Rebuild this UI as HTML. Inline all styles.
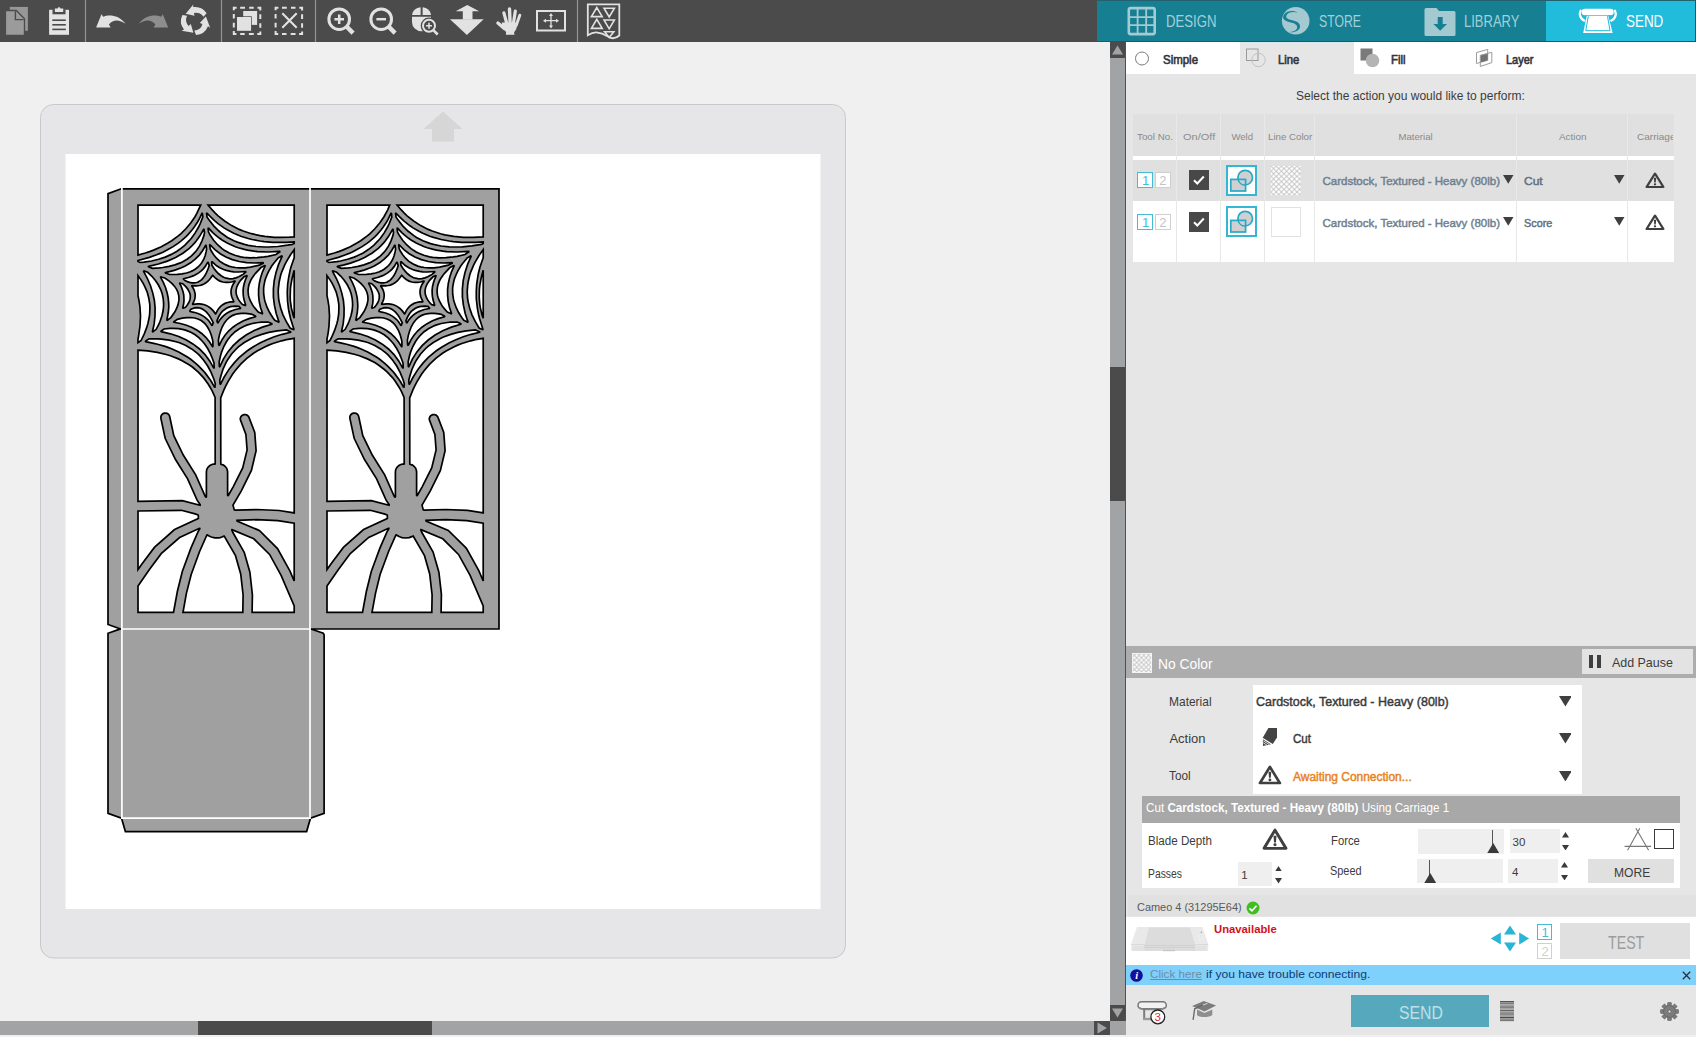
<!DOCTYPE html>
<html lang="en">
<head>
<meta charset="utf-8">
<title>Silhouette Studio - Send</title>
<style>
*{box-sizing:border-box;margin:0;padding:0}
html,body{width:1696px;height:1037px;overflow:hidden;background:#f0f0f0;font-family:"Liberation Sans",sans-serif;color:#3c3c3c}
.abs{position:absolute}
#toolbar{position:absolute;left:0;top:0;width:1097px;height:42px;background:#4b4b4b}
#nav{position:absolute;left:1097px;top:0;width:599px;height:42px;background:#177f92}
#nav .tab{position:absolute;top:-2px;height:42px;color:#a9cfd8;font-size:16px;line-height:42px}
#nav .tab span{position:absolute;top:1px}
#nav .send{left:449px;width:150px;background:#21bbdb;color:#fff;border-bottom:1px solid #2b6470}
#canvas{position:absolute;left:0;top:42px;width:1110px;height:979px;background:#f0f0f0}
#vscroll{position:absolute;left:1110px;top:42px;width:15px;height:979px;background:#a2a3a5}
#vline{position:absolute;left:1125px;top:42px;width:1px;height:995px;background:#505050}
#hscroll{position:absolute;left:0;top:1021px;width:1110px;height:14px;background:#a2a3a5}
#panel{position:absolute;left:1126px;top:42px;width:570px;height:995px;background:#e6e6e6}
.t{position:absolute;white-space:nowrap;line-height:1}
</style>
</head>
<body>
<div id="canvas">
<svg class="abs" style="left:0;top:0" width="1110" height="979" viewBox="0 42 1110 979">
<rect x="40.500" y="104.500" width="805" height="853.500" rx="13" fill="#e6e6e8" stroke="#c9c9cb" stroke-width="1"/>
<path d="M443 111.500l19.500 17.500h-8.500v12.500h-22v-12.500h-8.500z" fill="#d6d6d6"/>
<rect x="65.500" y="154" width="755" height="755" fill="#fff"/>
<path d="M120.5 628.9L108.0 633.3L108.0 813.3L121.5 818.2L125.4 831.6L306.6 831.6L310.5 818.2L324.1 813.3L324.1 634.8L323.2 633.1L311.0 629.0L499.0 629.0L499.0 188.8L121.2 188.8L108.0 193.6L108.0 624.5ZM289.6 237.2L279.3 237.4L274.4 237.3L264.8 236.4L260.2 235.7L251.5 233.7L243.2 231.0L239.2 229.4L231.7 225.6L224.6 221.0L218.1 215.8L215.0 212.8L212.0 209.7L208.1 205.1L294.2 205.1L294.2 236.9ZM292.6 244.3L287.5 245.2L277.9 246.5L268.8 247.0L264.4 247.0L256.1 246.5L248.2 245.3L244.4 244.4L237.3 242.1L233.9 240.7L227.5 237.4L221.6 233.3L218.9 231.0L213.7 225.9L209.1 220.1L207.0 216.9L206.6 213.5L206.9 213.3L207.2 213.4L212.4 218.7L215.1 221.2L218.0 223.6L224.0 227.9L227.2 229.8L233.8 233.3L240.8 236.2L248.2 238.5L252.1 239.5L260.1 241.0L264.2 241.6L272.8 242.3L277.3 242.4L286.5 242.3L294.2 241.8L294.2 243.4ZM294.2 257.8L291.0 267.0L290.1 270.4L288.7 277.3L287.7 284.1L287.3 291.0L287.3 294.4L287.6 301.4L288.4 308.3L289.0 311.8L290.6 318.8L293.9 329.3L293.8 329.6L293.5 329.7L290.1 328.0L286.2 321.4L283.0 314.8L280.7 308.2L279.1 301.6L278.6 298.3L278.2 291.7L278.4 288.4L279.2 281.7L280.7 275.1L281.8 271.8L284.6 265.2L286.3 261.9L290.2 255.2L294.2 249.6ZM294.2 318.2L293.0 314.7L291.3 307.7L290.3 300.5L290.2 296.8L290.4 289.2L290.8 285.3L292.3 277.4L294.2 270.3ZM279.1 510.5L256.8 509.5L235.3 510.2L234.3 509.9L233.0 505.2L241.3 490.8L251.4 470.5L256.1 450.8L254.8 433.0L254.5 431.8L249.0 417.4L248.4 416.3L247.0 415.1L245.4 414.5L243.6 414.7L242.1 415.4L241.4 416.1L240.7 417.2L240.3 418.4L240.4 419.7L245.9 434.4L247.1 449.9L242.7 467.9L233.3 486.6L228.3 495.4L227.8 495.5L227.6 495.2L227.6 472.0L227.4 470.5L226.7 468.3L225.3 466.5L223.5 465.1L221.0 464.3L220.8 464.0L220.7 397.9L223.8 390.1L225.8 385.8L227.9 381.8L232.5 374.3L235.1 370.7L240.7 364.2L246.8 358.4L253.5 353.3L257.1 351.0L264.7 346.9L268.7 345.1L272.9 343.5L281.7 340.8L286.3 339.7L294.2 338.3L294.2 512.9ZM290.0 571.2L277.5 548.6L260.1 531.1L258.5 530.1L237.5 521.3L237.0 520.8L237.0 520.4L256.6 519.7L277.8 520.6L294.2 523.2L294.2 581.0ZM252.4 594.9L249.9 572.2L244.3 552.6L243.8 551.6L232.9 532.5L231.8 530.0L232.0 529.6L253.8 538.8L269.6 554.4L281.1 575.3L294.2 605.9L294.2 612.3L252.1 612.3ZM186.4 593.4L191.2 574.5L199.5 551.7L206.9 535.0L207.3 534.9L209.6 536.3L211.3 537.0L214.8 537.9L218.4 537.9L220.2 537.6L221.9 537.0L223.9 536.1L224.2 536.1L235.5 555.7L240.7 574.0L243.1 595.0L242.8 612.3L183.0 612.3ZM149.6 569.2L161.2 553.7L179.6 537.5L199.4 528.3L199.8 528.4L199.8 528.7L198.1 531.6L190.9 548.1L182.3 571.5L177.4 591.3L173.5 612.3L138.0 612.3L138.0 586.0ZM138.0 511.0L181.4 510.3L195.1 513.9L198.1 514.9L198.3 515.2L198.4 518.3L198.2 518.5L175.1 529.3L174.0 530.0L154.4 547.4L142.1 563.7L138.0 569.6ZM138.0 350.2L147.7 350.9L157.3 352.4L166.2 354.5L170.4 355.8L178.4 358.9L182.1 360.7L189.1 364.7L192.4 367.0L198.3 372.1L203.7 377.9L208.3 384.2L210.4 387.7L212.4 391.3L215.1 397.5L215.2 463.9L214.9 464.2L213.4 464.2L211.9 464.5L209.9 465.5L208.7 466.5L207.7 467.7L206.7 469.7L206.4 472.0L206.4 496.7L206.1 497.1L205.7 497.0L205.1 496.1L195.7 474.9L183.4 455.3L173.8 435.6L169.7 416.6L169.2 415.3L168.1 414.0L167.0 413.3L165.7 413.0L164.4 413.1L163.1 413.6L162.1 414.4L161.3 415.4L160.9 416.7L160.9 418.5L165.1 437.9L165.5 439.0L175.5 459.5L187.6 478.8L197.1 500.2L200.2 504.8L200.1 505.3L182.3 500.7L138.0 501.4ZM138.6 336.0L140.0 326.0L140.5 316.1L139.9 306.4L138.9 300.1L138.0 295.7L138.0 275.6L141.5 280.6L143.2 283.4L144.7 286.3L147.2 292.1L148.8 298.2L149.8 304.3L149.9 307.4L149.7 313.7L149.3 317.0L147.9 323.5L146.9 326.9L144.4 333.6L141.1 340.5L138.0 342.7L138.0 339.0ZM138.0 260.5L149.4 257.4L156.6 254.8L160.1 253.4L163.4 251.9L169.7 248.6L172.7 246.9L178.3 243.1L180.9 241.1L185.8 236.8L188.0 234.6L192.2 229.8L194.1 227.3L197.6 222.0L199.2 219.2L201.9 213.5L202.1 213.3L202.4 213.5L202.8 217.1L200.1 223.8L198.6 227.0L195.2 232.9L191.4 238.2L189.2 240.7L184.7 245.3L179.7 249.3L177.0 251.2L171.3 254.4L165.2 257.1L158.6 259.3L151.5 261.0L144.0 262.1L140.1 262.5L138.0 261.4ZM200.7 205.1L196.8 213.4L195.0 216.7L190.9 222.8L186.1 228.5L180.8 233.8L177.9 236.2L171.7 240.7L168.4 242.8L161.3 246.7L153.6 250.1L149.6 251.6L145.3 253.0L138.0 255.1L138.0 205.1ZM219.8 380.1L220.8 376.3L223.0 369.2L226.0 362.7L227.7 359.7L231.6 354.0L236.2 349.0L238.7 346.6L244.3 342.5L250.5 338.9L253.8 337.3L261.0 334.6L268.8 332.4L277.2 330.9L286.4 329.9L290.6 331.8L290.7 332.1L290.5 332.3L282.2 334.3L278.2 335.5L274.3 336.8L266.9 339.7L259.9 343.0L253.4 346.7L250.3 348.7L247.3 350.8L241.7 355.3L239.1 357.7L234.2 362.9L229.7 368.4L227.7 371.4L223.9 377.5L220.7 383.9L220.4 384.1L220.0 383.8ZM273.8 263.2L278.0 258.1L281.6 256.0L282.0 256.1L282.1 256.4L278.6 264.4L276.0 272.5L274.2 280.6L273.4 288.8L273.4 297.0L274.4 305.2L276.2 313.5L278.9 321.8L278.7 322.2L274.8 320.3L272.9 317.7L269.6 312.5L267.0 307.2L265.2 302.0L264.5 299.4L263.7 294.2L263.6 289.0L263.8 286.4L264.8 281.2L265.5 278.6L267.6 273.5L268.9 270.9L271.9 265.8ZM208.1 228.5L208.3 228.2L208.7 228.3L212.8 232.6L215.0 234.6L219.6 238.3L222.0 240.0L227.2 243.0L229.8 244.3L235.4 246.7L238.3 247.7L244.4 249.4L247.6 250.1L254.1 251.2L257.5 251.6L268.2 252.0L279.4 251.4L279.7 251.5L279.8 251.9L276.0 254.5L268.1 256.3L264.3 256.9L257.0 257.7L250.1 257.8L243.7 257.3L240.6 256.8L234.8 255.3L229.3 253.1L224.3 250.2L222.0 248.6L217.6 244.7L213.6 240.2L210.1 235.0L208.5 232.1ZM220.0 366.4L219.6 366.6L219.3 366.3L219.2 361.7L220.6 355.4L221.5 352.4L223.7 346.8L226.4 341.8L227.9 339.5L231.3 335.3L235.1 331.7L239.4 328.7L244.2 326.2L246.8 325.1L252.3 323.5L258.3 322.5L261.5 322.2L268.1 322.0L271.8 323.7L271.9 324.0L271.7 324.2L262.4 327.1L253.8 330.7L246.1 335.0L239.2 340.0L233.1 345.6L227.9 351.9L223.5 358.9ZM255.5 273.3L260.7 267.8L264.6 265.6L265.0 265.7L265.1 266.0L262.5 271.8L260.6 277.6L259.3 283.5L258.6 289.4L258.6 295.4L259.2 301.4L260.5 307.4L262.5 313.4L262.2 313.8L258.3 312.0L256.6 310.1L253.6 306.5L252.4 304.6L250.4 301.0L249.0 297.3L248.5 295.4L248.1 291.8L248.1 289.9L248.6 286.2L249.1 284.3L250.6 280.7L251.6 278.8L254.0 275.2ZM209.7 245.2L209.9 244.8L210.3 244.9L214.9 249.6L220.2 253.7L225.9 257.0L232.3 259.6L239.2 261.5L246.6 262.6L254.5 263.0L262.9 262.7L263.2 262.9L263.2 263.2L259.3 265.2L250.6 267.1L245.2 267.8L240.1 267.9L235.3 267.5L233.0 267.2L228.8 266.1L224.9 264.4L221.3 262.3L219.6 261.1L216.5 258.2L213.7 254.8L211.3 251.0L210.2 248.8ZM219.3 345.2L219.0 345.3L218.7 345.0L218.4 340.2L219.4 335.1L220.8 330.5L222.4 326.5L224.4 322.9L226.7 320.0L229.4 317.5L232.3 315.6L234.0 314.9L237.5 313.8L241.3 313.3L245.4 313.3L249.8 313.8L252.2 314.3L255.5 316.2L255.6 316.5L255.4 316.7L249.0 318.6L243.0 321.0L237.7 323.9L232.9 327.2L228.6 331.0L225.0 335.3L221.8 340.1ZM240.6 280.3L244.0 276.8L246.6 275.7L247.0 275.8L247.0 276.1L245.5 279.6L244.3 283.2L243.5 286.7L243.1 290.3L243.2 294.0L243.4 296.4L244.1 300.1L245.6 304.9L245.3 305.4L242.5 304.5L240.4 302.2L238.7 299.9L237.5 297.7L236.3 294.2L236.0 290.7L236.7 287.2L238.2 283.8ZM211.7 262.1L211.9 261.8L212.3 261.8L216.3 265.5L219.8 267.7L223.6 269.5L226.3 270.4L230.6 271.4L233.7 271.8L238.6 272.0L245.4 271.5L245.7 271.7L245.8 272.0L243.4 274.1L241.8 275.1L238.8 276.7L235.9 277.9L233.0 278.6L230.2 278.8L228.8 278.7L226.2 278.2L223.6 277.2L221.1 275.7L218.6 273.8L216.3 271.4L214.0 268.5L211.9 265.2ZM217.0 320.7L218.7 316.7L220.6 313.5L222.1 311.7L223.7 310.2L226.4 308.3L228.4 307.4L230.5 306.7L232.7 306.3L235.1 306.2L238.9 306.4L240.5 308.0L240.5 308.3L240.3 308.5L235.3 309.5L231.9 310.7L229.8 311.6L226.8 313.2L224.2 315.1L221.9 317.4L219.8 319.9L218.0 322.8L217.5 322.6ZM191.8 286.1L191.8 285.8L192.1 285.6L196.4 285.8L199.4 285.5L201.3 285.1L203.9 284.0L206.3 282.6L208.5 280.7L210.5 278.3L212.6 275.4L212.8 275.5L215.2 277.8L217.6 279.7L220.1 281.1L222.8 282.0L225.6 282.4L228.5 282.4L231.5 282.0L234.8 281.1L235.0 281.5L232.9 284.7L231.9 287.1L231.4 288.7L231.0 291.2L231.1 293.7L231.6 296.2L232.5 298.7L233.8 301.5L233.5 301.8L230.4 301.9L227.6 302.5L225.0 303.4L222.7 304.7L220.6 306.4L218.8 308.4L217.2 310.9L215.9 313.6L215.5 313.8L213.3 310.9L210.9 308.5L208.5 306.6L205.8 305.2L202.9 304.3L199.8 303.8L197.6 303.8L193.0 304.3L192.7 304.2L192.7 303.8L193.8 301.6L194.7 299.3L195.1 297.0L195.2 294.8L194.9 292.6L194.2 290.4L193.2 288.2ZM145.7 341.7L145.5 341.4L145.6 341.1L149.1 338.9L157.5 338.9L161.5 339.1L169.1 340.1L176.1 341.7L179.5 342.8L185.8 345.5L191.6 348.9L196.8 352.9L199.3 355.2L203.7 360.3L207.7 366.0L211.1 372.4L214.0 379.5L215.2 383.4L215.3 384.7L215.1 385.0L215.0 387.1L214.8 387.2L214.5 387.1L211.5 381.8L209.6 378.9L205.5 373.4L203.3 370.8L198.5 365.9L196.0 363.6L190.7 359.3L187.8 357.3L181.8 353.7L178.7 352.0L172.1 349.0L168.6 347.6L165.1 346.4L157.6 344.2L153.7 343.3ZM161.3 331.7L161.1 331.5L161.2 331.1L164.0 329.0L170.0 328.4L172.9 328.4L178.5 328.7L183.6 329.7L186.1 330.4L190.8 332.3L195.2 334.8L199.1 337.9L201.0 339.8L204.5 343.8L207.7 348.5L210.5 353.9L211.7 356.8L214.0 363.0L214.2 367.8L213.9 367.9L213.6 367.8L209.7 360.9L205.0 354.6L199.5 349.0L193.3 344.2L186.4 340.0L178.8 336.5L170.4 333.8ZM190.2 311.6L189.9 311.2L190.6 309.5L192.8 308.5L194.9 307.9L196.9 307.7L199.0 307.8L200.9 308.4L202.8 309.3L204.7 310.6L206.5 312.2L209.1 315.3L210.7 317.9L213.2 322.5L212.4 325.2L212.1 325.3L211.8 325.2L209.5 321.7L207.4 319.3L205.0 317.3L203.3 316.1L200.4 314.5L197.3 313.2L193.9 312.3ZM174.0 322.3L173.7 322.0L173.8 321.7L177.4 319.4L182.2 318.2L186.7 317.6L190.8 317.5L194.6 318.0L198.0 319.0L201.2 320.6L204.0 322.7L205.3 324.1L207.5 327.0L209.5 330.5L211.1 334.6L212.4 339.2L212.9 341.7L212.9 346.4L212.7 346.6L212.4 346.4L209.4 341.7L205.8 337.3L201.7 333.5L197.2 330.2L192.1 327.4L186.5 325.2L180.4 323.5ZM183.6 279.3L183.5 279.0L183.7 278.7L189.3 277.3L193.1 275.9L195.5 274.8L198.7 272.9L201.5 270.7L203.1 269.1L205.3 266.4L207.6 262.4L207.9 262.3L208.2 262.4L209.2 265.4L208.0 269.2L206.6 272.4L205.1 275.2L203.5 277.6L201.7 279.6L199.8 281.1L197.7 282.2L196.6 282.5L194.3 282.9L191.9 282.9L189.4 282.4L186.8 281.4L185.4 280.8ZM165.6 273.1L165.4 272.8L165.7 272.5L170.4 271.4L175.0 270.1L181.4 267.8L185.2 266.0L190.6 262.8L195.2 259.2L199.3 255.1L202.7 250.5L205.5 245.5L205.8 245.3L206.1 245.5L206.6 249.2L206.2 251.4L205.2 255.5L203.8 259.2L201.9 262.5L200.8 264.0L198.4 266.7L195.5 269.0L192.2 270.9L190.4 271.7L186.5 273.0L182.1 273.9L177.4 274.4L169.6 274.5ZM148.6 266.9L148.4 266.6L148.7 266.3L158.4 264.0L167.4 261.1L175.6 257.5L182.9 253.2L189.3 248.3L191.3 246.5L194.9 242.6L196.6 240.6L199.6 236.3L203.5 229.5L203.8 229.3L204.1 229.5L204.5 233.0L203.8 235.9L201.9 241.1L199.6 245.9L196.7 250.2L195.1 252.2L191.5 255.8L187.4 259.0L182.8 261.7L180.3 262.9L174.9 264.9L169.1 266.4L162.8 267.5L159.4 267.9L152.4 268.3ZM179.7 283.6L179.7 283.3L180.0 283.1L182.7 283.7L185.8 286.6L187.4 288.6L189.1 291.5L189.9 293.5L190.3 295.4L190.3 297.4L190.0 299.4L189.4 301.4L188.4 303.3L187.1 305.3L185.5 307.3L183.2 308.2L182.9 308.1L182.8 307.8L183.7 303.6L184.0 300.5L183.8 295.3L183.2 292.3L182.3 289.4L181.2 286.4ZM160.6 277.3L160.6 277.0L161.0 276.8L165.2 278.2L168.9 280.8L172.1 283.6L174.6 286.4L176.6 289.4L178.0 292.5L178.8 295.8L179.0 299.1L178.8 300.9L178.1 304.4L176.8 308.0L174.9 311.8L170.9 317.6L167.3 320.3L167.0 320.2L166.9 319.9L168.3 312.5L168.8 307.0L168.7 303.4L168.2 298.0L167.1 292.7L165.5 287.5L163.3 282.3ZM143.6 271.4L143.7 271.1L144.0 271.0L147.7 272.3L151.9 276.3L155.4 280.5L158.3 284.8L160.6 289.3L162.2 293.8L163.2 298.5L163.6 303.3L163.6 305.8L163.1 310.8L161.9 316.0L160.1 321.2L159.0 323.9L156.2 329.3L152.9 331.9L152.6 331.8L152.5 331.5L154.2 323.7L155.0 315.8L155.1 308.1L154.4 300.5L152.8 293.1L150.5 285.7L147.4 278.5ZM483.2 236.9L473.4 237.4L468.3 237.4L463.4 237.3L453.8 236.4L444.8 234.8L440.5 233.7L432.2 231.0L428.2 229.4L420.7 225.6L413.6 221.0L407.1 215.8L404.0 212.8L401.0 209.7L397.1 205.1L483.2 205.1ZM483.2 243.4L481.5 244.4L471.7 245.9L462.3 246.8L453.4 247.0L449.2 246.9L441.0 246.0L433.4 244.4L429.8 243.4L422.9 240.7L416.5 237.4L413.5 235.4L407.9 231.0L402.7 225.9L398.1 220.1L396.0 216.9L395.6 213.5L395.9 213.3L396.2 213.4L401.4 218.7L404.1 221.2L410.0 225.8L413.0 227.9L419.4 231.6L422.8 233.3L429.8 236.2L433.5 237.4L441.1 239.5L449.1 241.0L453.2 241.6L461.8 242.3L466.3 242.4L475.5 242.3L483.2 241.8ZM483.2 257.8L480.0 267.0L478.3 273.8L477.7 277.3L476.7 284.1L476.3 291.0L476.3 297.9L476.6 301.4L477.4 308.3L478.7 315.3L479.6 318.8L482.9 329.3L482.8 329.6L482.5 329.7L479.1 328.0L475.2 321.4L472.0 314.8L469.7 308.2L468.1 301.6L467.6 298.3L467.2 291.7L467.7 285.1L468.2 281.7L469.7 275.1L470.8 271.8L473.6 265.2L475.3 261.9L479.2 255.2L483.2 249.6ZM483.2 318.2L482.0 314.7L480.3 307.7L479.7 304.1L479.2 296.8L479.4 289.2L479.8 285.3L481.3 277.4L483.2 270.3ZM483.2 512.9L467.5 510.4L445.8 509.5L424.3 510.2L423.3 509.9L422.0 505.2L430.3 490.8L440.4 470.5L445.1 450.8L443.8 433.0L443.5 431.8L438.0 417.4L437.4 416.3L436.0 415.1L434.4 414.5L432.6 414.7L431.1 415.4L430.4 416.1L429.7 417.2L429.3 418.4L429.4 419.7L434.9 434.4L436.1 449.9L431.7 467.9L422.3 486.6L417.3 495.4L416.8 495.5L416.6 495.2L416.6 472.0L416.4 470.5L415.7 468.3L414.3 466.5L412.5 465.1L410.0 464.3L409.8 464.0L409.7 397.9L412.8 390.1L414.8 385.8L416.9 381.8L421.5 374.3L424.1 370.7L429.7 364.2L435.8 358.4L442.5 353.3L446.1 351.0L453.7 346.9L457.7 345.1L461.9 343.5L470.7 340.8L475.3 339.7L483.2 338.3ZM483.2 581.0L478.8 570.7L466.8 549.0L466.0 547.9L448.3 530.5L426.5 521.3L426.0 520.8L426.0 520.4L445.6 519.7L466.8 520.6L483.2 523.2ZM441.1 612.3L441.4 594.3L438.9 572.2L433.1 552.1L421.9 532.5L420.8 530.0L421.0 529.6L442.8 538.8L458.5 554.4L470.1 575.3L483.2 605.9L483.2 612.3ZM372.0 612.3L375.5 593.4L380.1 574.5L388.5 551.7L395.6 535.6L395.9 535.0L396.3 534.9L398.6 536.3L400.3 537.0L402.0 537.6L405.6 538.0L409.2 537.6L413.2 536.1L424.5 555.7L429.7 574.0L432.1 595.0L431.8 612.3ZM327.0 586.0L338.6 569.2L350.3 553.6L368.7 537.4L388.4 528.3L388.8 528.3L388.8 528.7L387.1 531.6L379.9 548.1L371.3 571.5L366.4 591.3L362.5 612.3L327.0 612.3ZM327.0 511.0L370.3 510.3L384.1 513.9L387.1 514.9L387.3 515.2L387.4 518.2L387.2 518.5L364.1 529.3L363.0 530.0L343.4 547.4L331.1 563.7L327.0 569.6ZM327.0 350.2L336.6 350.9L341.5 351.6L346.3 352.4L355.2 354.5L359.4 355.8L367.4 358.9L374.7 362.6L378.1 364.8L384.4 369.5L387.3 372.1L392.7 377.8L395.1 381.0L399.4 387.7L401.4 391.3L404.1 397.5L404.2 463.9L403.9 464.2L402.4 464.2L400.9 464.5L398.9 465.5L397.7 466.5L396.7 467.7L395.7 469.7L395.4 472.0L395.4 496.7L395.1 497.1L394.7 497.0L394.1 496.1L384.7 474.9L372.4 455.3L362.8 435.6L358.7 416.6L358.2 415.3L357.1 414.0L356.0 413.3L354.7 413.0L353.4 413.1L352.1 413.6L351.1 414.4L350.3 415.4L349.9 416.7L349.9 418.5L354.1 437.9L354.5 439.0L364.5 459.5L376.6 478.8L386.1 500.2L389.2 504.8L389.1 505.3L371.3 500.7L327.0 501.4ZM327.0 339.0L328.2 332.6L329.0 326.0L329.5 316.1L328.9 306.4L327.9 300.1L327.0 295.7L327.0 275.6L330.5 280.6L332.2 283.4L333.7 286.3L336.2 292.1L337.8 298.2L338.8 304.3L338.9 307.4L338.7 313.8L337.7 320.2L336.9 323.5L334.7 330.2L331.8 337.0L330.0 340.5L327.0 342.7ZM327.0 260.5L338.4 257.4L345.6 254.8L349.1 253.4L352.4 251.9L358.7 248.6L361.7 246.9L367.3 243.1L369.9 241.1L374.8 236.8L377.0 234.6L381.2 229.8L383.1 227.3L386.6 222.0L388.2 219.2L390.9 213.5L391.1 213.3L391.5 213.5L391.8 217.1L389.1 223.8L387.6 227.0L384.2 232.9L380.4 238.2L378.2 240.7L373.7 245.3L368.7 249.3L363.2 252.9L357.3 255.8L354.2 257.1L347.6 259.3L340.5 261.0L336.8 261.6L329.1 262.5L327.0 261.4ZM389.7 205.1L387.6 210.1L385.8 213.4L384.0 216.7L379.9 222.8L375.1 228.5L369.8 233.8L366.9 236.2L360.7 240.7L357.4 242.8L350.3 246.7L342.6 250.1L338.6 251.6L334.3 253.0L327.0 255.1L327.0 205.1ZM408.8 380.2L409.8 376.3L412.0 369.2L415.0 362.7L416.7 359.7L420.6 354.0L425.2 349.0L427.7 346.6L433.3 342.5L439.5 338.9L442.8 337.3L450.0 334.6L457.8 332.4L466.2 330.9L475.4 329.9L479.6 331.8L479.7 332.1L479.5 332.3L471.2 334.3L467.2 335.5L463.3 336.8L455.9 339.7L448.9 343.0L442.4 346.7L439.3 348.7L436.3 350.8L430.7 355.3L428.1 357.7L423.2 362.9L418.7 368.4L416.7 371.4L412.9 377.5L409.7 383.9L409.4 384.1L409.0 383.8ZM462.8 263.2L467.0 258.1L470.6 256.0L471.0 256.1L471.1 256.4L467.6 264.4L465.0 272.5L463.2 280.6L462.4 288.8L462.4 297.0L463.4 305.2L465.2 313.5L467.9 321.8L467.7 322.2L463.8 320.3L461.9 317.7L458.6 312.5L456.0 307.2L454.2 302.0L453.5 299.4L452.7 294.2L452.6 289.0L452.8 286.4L453.8 281.2L454.5 278.6L456.6 273.5L457.9 270.9L460.9 265.8ZM397.1 228.6L397.3 228.2L397.7 228.3L401.8 232.6L404.0 234.6L408.6 238.3L411.0 240.0L416.2 243.0L418.8 244.3L424.4 246.7L427.3 247.7L433.4 249.4L436.6 250.1L443.1 251.2L446.5 251.6L457.2 252.0L468.4 251.4L468.7 251.5L468.8 251.9L465.0 254.5L457.1 256.3L453.3 256.9L446.0 257.7L439.1 257.8L432.7 257.3L429.6 256.8L423.8 255.3L418.3 253.1L415.8 251.7L411.0 248.6L406.6 244.7L402.6 240.2L399.1 235.0L397.5 232.1ZM409.0 366.4L408.6 366.6L408.3 366.3L408.2 361.7L409.6 355.4L410.5 352.4L412.7 346.8L415.4 341.8L416.9 339.5L420.3 335.3L424.1 331.7L428.4 328.7L433.2 326.2L435.8 325.1L441.3 323.5L447.3 322.5L450.5 322.2L457.1 322.0L460.8 323.7L460.9 324.0L460.7 324.2L451.4 327.1L442.8 330.7L435.1 335.0L428.2 340.0L422.1 345.6L416.9 351.9L412.5 358.9ZM444.5 273.3L449.7 267.8L453.6 265.6L454.0 265.7L454.1 266.0L451.5 271.8L449.6 277.6L448.3 283.5L447.6 289.4L447.6 295.4L448.2 301.4L449.5 307.4L451.5 313.4L451.2 313.8L447.3 312.0L445.6 310.1L442.6 306.5L441.4 304.6L439.4 301.0L438.0 297.3L437.5 295.4L437.1 291.8L437.1 289.9L437.6 286.2L438.1 284.3L439.6 280.7L440.6 278.8L443.0 275.2ZM398.7 245.2L398.9 244.8L399.3 244.9L403.9 249.6L409.2 253.7L414.9 257.0L421.3 259.6L428.2 261.5L435.6 262.6L443.5 263.0L451.9 262.7L452.2 262.9L452.2 263.2L448.3 265.2L439.6 267.1L434.2 267.8L429.1 267.9L424.3 267.5L422.0 267.2L417.8 266.1L413.9 264.4L410.3 262.3L408.6 261.1L405.5 258.2L402.7 254.8L400.3 251.0L399.2 248.8ZM408.4 345.1L408.0 345.3L407.7 345.0L407.4 340.2L408.4 335.1L409.8 330.5L411.4 326.5L413.4 322.9L415.7 320.0L418.4 317.5L421.3 315.6L423.0 314.9L426.5 313.8L430.3 313.3L434.4 313.3L438.8 313.8L441.2 314.3L444.5 316.2L444.6 316.5L444.4 316.7L438.0 318.6L432.0 321.0L426.7 323.9L421.9 327.2L417.6 331.0L414.0 335.3L410.8 340.1ZM429.6 280.3L433.0 276.8L435.6 275.7L436.0 275.8L436.0 276.1L434.5 279.6L433.3 283.2L432.5 286.7L432.1 290.3L432.2 294.0L432.4 296.4L433.1 300.1L434.6 304.9L434.3 305.4L431.5 304.5L429.4 302.2L427.7 299.9L426.5 297.7L425.3 294.2L425.0 290.7L425.7 287.2L427.2 283.8ZM400.7 262.1L400.9 261.8L401.3 261.8L405.3 265.5L408.8 267.7L412.6 269.5L415.3 270.4L419.6 271.4L422.7 271.8L427.6 272.0L434.4 271.5L434.7 271.6L434.8 272.0L432.4 274.1L430.8 275.1L427.8 276.7L424.9 277.9L422.0 278.6L419.2 278.8L417.8 278.7L415.2 278.2L412.6 277.2L410.1 275.7L407.6 273.8L405.3 271.4L403.0 268.5L400.9 265.2ZM406.0 320.7L407.7 316.7L409.6 313.5L411.1 311.7L412.7 310.2L415.4 308.3L417.4 307.4L419.5 306.7L421.7 306.3L424.1 306.2L427.9 306.4L429.5 308.0L429.5 308.3L429.3 308.5L424.3 309.5L420.9 310.7L418.8 311.6L415.8 313.2L413.2 315.1L410.9 317.4L408.8 319.9L407.0 322.8L406.5 322.6ZM380.8 286.2L380.8 285.8L381.1 285.6L385.4 285.8L388.4 285.5L390.3 285.1L392.9 284.0L395.3 282.6L397.5 280.7L399.5 278.3L401.6 275.4L401.8 275.5L404.2 277.8L406.6 279.7L409.1 281.1L411.8 282.0L414.6 282.4L417.5 282.4L420.5 282.0L423.8 281.1L424.0 281.5L421.9 284.7L420.9 287.1L420.4 288.7L420.0 291.2L420.1 293.7L420.6 296.2L421.5 298.7L422.8 301.5L422.5 301.8L419.4 301.9L416.6 302.5L414.0 303.4L411.7 304.7L409.6 306.4L407.8 308.4L406.2 310.9L404.9 313.6L404.5 313.8L402.3 310.9L399.9 308.5L397.5 306.6L394.8 305.2L391.9 304.3L388.8 303.8L386.6 303.8L382.0 304.3L381.7 304.2L381.7 303.8L382.8 301.6L383.7 299.3L384.1 297.0L384.2 294.8L383.9 292.6L383.2 290.4L382.2 288.2ZM334.8 341.7L334.5 341.4L334.6 341.1L338.1 338.9L346.5 338.9L350.5 339.1L358.1 340.1L365.1 341.7L368.5 342.8L374.8 345.5L380.6 348.9L385.8 352.9L388.3 355.2L392.7 360.3L396.7 366.0L400.1 372.4L403.0 379.5L404.2 383.4L404.3 384.7L404.1 385.0L404.0 387.1L403.8 387.2L403.5 387.1L400.5 381.8L398.6 378.9L394.5 373.4L392.3 370.8L387.5 365.9L385.0 363.6L379.7 359.3L376.8 357.3L370.8 353.7L367.7 352.0L361.1 349.0L357.6 347.6L354.1 346.4L346.6 344.2L342.7 343.3ZM350.4 331.7L350.1 331.5L350.2 331.1L353.0 329.0L359.0 328.4L361.9 328.4L367.5 328.7L372.6 329.7L375.1 330.4L379.8 332.3L384.2 334.8L388.1 337.9L390.0 339.8L393.5 343.8L396.7 348.5L399.5 353.9L400.7 356.8L403.0 363.0L403.2 367.8L402.9 367.9L402.6 367.8L398.7 360.9L394.0 354.6L388.5 349.0L382.3 344.2L375.4 340.0L367.8 336.5L359.4 333.8ZM379.2 311.6L378.9 311.2L379.6 309.5L381.8 308.5L383.9 307.9L385.9 307.7L388.0 307.8L389.9 308.4L391.8 309.3L393.7 310.6L395.5 312.2L398.1 315.3L399.7 317.9L402.2 322.5L401.4 325.2L401.1 325.3L400.8 325.2L398.5 321.7L396.4 319.3L394.0 317.3L392.3 316.1L389.4 314.5L386.3 313.2L382.9 312.3ZM363.0 322.3L362.7 322.1L362.8 321.7L366.4 319.4L371.2 318.2L375.7 317.6L379.8 317.5L383.6 318.0L387.0 319.0L390.2 320.6L393.0 322.7L394.3 324.1L396.5 327.0L398.5 330.5L400.1 334.6L401.4 339.2L401.9 341.7L401.9 346.4L401.7 346.6L401.4 346.4L398.4 341.7L394.8 337.3L390.7 333.5L386.2 330.2L381.1 327.4L375.5 325.2L369.4 323.5ZM372.6 279.3L372.5 279.0L372.7 278.7L378.3 277.3L382.1 275.9L384.5 274.8L387.7 272.9L390.5 270.7L392.1 269.1L394.3 266.4L396.6 262.4L396.9 262.3L397.2 262.4L398.2 265.4L397.0 269.2L395.6 272.4L394.1 275.2L392.5 277.6L390.7 279.6L388.8 281.1L386.7 282.2L385.6 282.5L383.3 282.9L380.9 282.9L378.4 282.4L375.8 281.4L374.4 280.8ZM354.7 273.1L354.4 272.8L354.7 272.5L359.4 271.4L364.0 270.1L370.4 267.8L374.2 266.0L379.6 262.8L384.2 259.2L388.3 255.1L391.7 250.5L394.5 245.5L394.8 245.3L395.1 245.5L395.6 249.2L395.2 251.4L394.2 255.5L392.8 259.2L390.9 262.5L389.8 264.0L387.4 266.7L384.5 269.0L381.2 270.9L379.4 271.7L375.5 273.0L371.1 273.9L366.4 274.4L358.6 274.5ZM337.7 266.9L337.4 266.6L337.7 266.3L344.2 264.9L350.5 263.1L359.2 260.0L364.6 257.5L371.9 253.2L378.3 248.3L380.3 246.5L383.9 242.6L385.6 240.6L388.6 236.3L392.5 229.5L392.8 229.3L393.1 229.5L393.5 233.0L392.8 235.9L390.9 241.1L388.6 245.9L385.7 250.2L384.1 252.2L380.5 255.8L376.4 259.0L371.8 261.7L369.3 262.9L363.9 264.9L358.1 266.4L351.8 267.5L348.4 267.9L341.4 268.3ZM368.7 283.6L368.7 283.3L369.0 283.1L371.7 283.7L374.8 286.6L376.4 288.6L378.1 291.5L378.9 293.5L379.3 295.4L379.3 297.4L379.0 299.4L378.4 301.4L377.4 303.3L376.1 305.3L374.5 307.3L372.2 308.2L371.9 308.1L371.8 307.8L372.7 303.6L373.0 300.5L372.8 295.3L372.2 292.3L371.3 289.4L370.2 286.4ZM349.6 277.4L349.6 277.0L350.0 276.8L354.2 278.2L357.9 280.8L361.1 283.6L363.6 286.4L365.6 289.4L367.0 292.5L367.8 295.8L368.0 299.1L367.8 300.9L367.1 304.4L365.8 308.0L363.9 311.8L359.9 317.6L356.3 320.3L356.0 320.2L355.9 319.9L357.3 312.5L357.8 307.0L357.7 303.4L357.2 298.0L356.1 292.7L354.5 287.5L352.3 282.3ZM332.6 271.5L332.6 271.1L333.0 271.0L336.7 272.3L340.9 276.3L344.4 280.5L347.3 284.8L349.6 289.3L351.2 293.8L352.2 298.5L352.6 303.3L352.6 305.8L352.1 310.8L350.9 316.0L349.1 321.2L348.0 323.9L345.2 329.3L341.9 331.9L341.6 331.8L341.5 331.5L343.2 323.7L344.0 315.8L344.1 308.1L343.4 300.5L341.8 293.1L339.5 285.7L336.4 278.5Z" fill="#a0a0a0" fill-rule="evenodd" stroke="#000" stroke-width="1.700" stroke-linejoin="miter"/>
<path d="M121.900 188V818.900M310 188V818.900M121.900 629H310M121.900 818.100H310" fill="none" stroke="#fff" stroke-width="1.700"/>
</svg>
</div>
<div id="vscroll"><div class="abs" style="left:0;top:0;width:15px;height:16px;background:#4b4b4b"></div><svg class="abs" style="left:0;top:0" width="15" height="16"><path d="M7.500 3.500l5.500 9H2z" fill="#a2a3a5"/></svg><div class="abs" style="left:0;top:325px;width:15px;height:134px;background:#4b4b4b"></div><div class="abs" style="left:0;top:963px;width:15px;height:16px;background:#4b4b4b"></div><svg class="abs" style="left:0;top:963px" width="15" height="16"><path d="M7.500 12.500l5.500-9H2z" fill="#a2a3a5"/></svg></div>
<div id="vline"></div>
<div id="hscroll"><div class="abs" style="left:198px;top:0;width:234px;height:14px;background:#4b4b4b"></div><div class="abs" style="left:1094px;top:0;width:16px;height:14px;background:#4b4b4b"></div><svg class="abs" style="left:1094px;top:0" width="16" height="14"><path d="M13 7l-9.500 5.500v-11z" fill="#a2a3a5"/></svg></div>
<div class="abs" style="left:1110px;top:1021px;width:16px;height:14px;background:#a2a3a5"></div>
<div class="abs" style="left:0;top:1034.600px;width:1126px;height:2.400px;background:#efefef"></div>
<div id="toolbar">
<svg width="1097" height="42" viewBox="0 0 1097 42" style="position:absolute;left:0;top:0">
<g fill="none" stroke="#949494" stroke-width="1.200">
<line x1="85.5" y1="0" x2="85.5" y2="42"/><line x1="221.5" y1="0" x2="221.5" y2="42"/><line x1="315.5" y1="0" x2="315.5" y2="42"/><line x1="577.5" y1="0" x2="577.5" y2="42"/>
</g>
<!-- copy (dim) -->
<rect x="9.800" y="6.900" width="18.100" height="23.900" fill="#979797"/>
<path d="M6.100 11.100H16L23.800 19V34.800H6.100Z" fill="#9b9b9b"/>
<path d="M5.500 10.500H16.300L24.500 18.800V31" fill="none" stroke="#4b4b4b" stroke-width="1.300"/>
<path d="M15.400 11.300V19.600H23.600" fill="none" stroke="#4b4b4b" stroke-width="1.400"/>
<!-- paste -->
<rect x="49.100" y="9.800" width="19.900" height="25" fill="#e4e4e4"/>
<rect x="52.500" y="9.500" width="13" height="4.800" fill="#4b4b4b"/>
<path d="M54.900 11.900V8.600H57.500L59.050 6.800L60.600 8.600H63.200V11.900Z" fill="#e4e4e4"/>
<g fill="#4b4b4b"><rect x="52.300" y="19.400" width="13.500" height="1.600"/><rect x="52.300" y="24" width="13.500" height="1.600"/><rect x="52.300" y="28.600" width="13.500" height="1.600"/></g>
<!-- undo -->
<path d="M96.100 27.600L101.500 14.200L103.200 16.800C109 14.300 119 15 125.600 23.800C120 19.600 113 18.800 108.900 24.500L110.700 27.600Z" fill="#e2e2e2"/>
<!-- redo -->
<path d="M168.200 27.600L162.800 14.200L161.100 16.800C155.300 14.300 145.300 15 138.700 23.800C144.300 19.600 151.300 18.800 155.400 24.500L153.600 27.600Z" fill="#8e8e8e"/>
<!-- refresh -->
<path d="M196.0 35.0A14.0 14.0 0 0 0 208.0 26.2L210.2 27.8L205.9 16.6L199.8 23.1L202.4 24.0A8.0 8.0 0 0 1 194.3 30.5ZM206.6 13.2A14.0 14.0 0 0 0 193.1 7.1L193.3 4.5L185.7 13.7L194.5 15.8L193.9 13.1A8.0 8.0 0 0 1 203.5 16.8ZM182.4 14.9A14.0 14.0 0 0 0 184.0 29.6L181.6 30.8L193.4 32.7L190.8 24.1L188.7 25.9A8.0 8.0 0 0 1 187.1 15.7Z" fill="#e2e2e2"/>
<!-- select all -->
<g fill="none" stroke="#e2e2e2" stroke-width="2" stroke-dasharray="5.600 3.560 4.840 4.200 4.500 3.800" stroke-dashoffset="2.800" stroke-linejoin="miter"><rect x="233.800" y="7.800" width="26.500" height="26.300"/><rect x="275.600" y="7.800" width="26.500" height="26.300"/></g>
<rect x="243.200" y="11" width="13.900" height="13.900" fill="#e2e2e2"/><rect x="236.300" y="16.300" width="15.500" height="15.200" fill="#4b4b4b"/><rect x="237" y="17" width="14.100" height="13.800" fill="#e2e2e2"/>
<!-- deselect -->
<path d="M282.300 13.300l14.400 14.400M296.700 13.300l-14.400 14.400" stroke="#e2e2e2" stroke-width="2.100" fill="none"/>
<!-- zoom in -->
<g fill="none" stroke="#e2e2e2"><circle cx="339.200" cy="19.200" r="10.300" stroke-width="3"/><path d="M346.800 26.800l6.300 6.300" stroke-width="4.400"/><path d="M334.400 19.200h9.600M339.200 14.400v9.600" stroke-width="2.500"/></g>
<!-- zoom out -->
<g fill="none" stroke="#e2e2e2"><circle cx="381.200" cy="19.200" r="10.300" stroke-width="3"/><path d="M388.800 26.800l6.300 6.300" stroke-width="4.400"/><path d="M376.400 19.200h9.600" stroke-width="2.500"/></g>
<!-- zoom select -->
<g fill="#e2e2e2"><path d="M420.600 7.300a9 8 0 0 0-8.600 7.700h8.600z"/><path d="M422.600 7.300a9 8 0 0 1 8.400 7.700h-8.400z"/><path d="M412 16.800H431V22a9.500 9.300 0 0 1-19 0Z"/></g>
<circle cx="429" cy="25.800" r="8.300" fill="#4b4b4b"/>
<g fill="none" stroke="#e2e2e2"><circle cx="429" cy="25.800" r="6" stroke-width="2" fill="#4b4b4b"/><path d="M433.500 30.300l4.200 4.200" stroke-width="2.600"/><path d="M426 25.800h6M429 22.800v6" stroke-width="1.600"/></g>
<!-- down arrows -->
<g fill="#e2e2e2"><path d="M467.300 5L479.200 11.300H472.500V19.500H462.800V11.300H455.700Z"/><path d="M450 19.200H483.700L466.900 34.900Z"/></g>
<!-- hand -->
<g fill="none" stroke="#e2e2e2" stroke-linecap="round"><path d="M503.900 12.900L506.900 24" stroke-width="3.200"/><path d="M509.500 9L510.100 23" stroke-width="3.400"/><path d="M515.300 11.200L513.400 23.500" stroke-width="3.200"/><path d="M519.800 15.200L516.200 25.500" stroke-width="2.900"/><path d="M497.900 23.100L504.600 28.800" stroke-width="3.300"/></g>
<path d="M501.800 22.400L517.600 22.400L516.300 29.100L514 32.500L514.500 34.800L505.900 34.800L506.100 31.900L502.300 27.500Z" fill="#e2e2e2"/>
<!-- fit -->
<g fill="none" stroke="#e2e2e2"><rect x="537" y="11" width="28" height="19.500" stroke-width="2"/><path d="M544.500 20.700h13M551 14.500v12.500" stroke-width="1.300"/></g>
<g fill="#e2e2e2"><path d="M543 20.700l3-2v4zM559 20.700l-3-2v4zM551 13l2 3h-4zM551 28.500l2-3h-4z"/></g>
<!-- triangles -->
<g fill="none" stroke="#e2e2e2" stroke-width="1.800" stroke-linejoin="miter"><path d="M587.800 4.300H619.300V35.500C616 38.500 611.500 38.800 608 36.500C603.500 33.600 600 32.600 596.400 32.400C593.500 32.300 590.500 33.500 587.800 35.200Z"/><path d="M591.400 16.600L596.800 7.600L602.200 16.600ZM604 8.200H614.400L609.200 17ZM591.400 28.400L596.800 19.400L602.200 28.400ZM604 20H614.400L609.200 28.800ZM604.600 31.800H613.800L609.200 37.500Z" stroke-width="1.600"/></g>
</svg>
</div>
<div id="nav">
<div class="abs" style="left:449px;top:0;width:150px;height:42px;background:#21bbdb"></div>
<svg class="abs" style="left:0;top:0" width="599" height="42" viewBox="1097 0 599 42">
<g fill="none" stroke="#a3cbd3"><rect x="1128.800" y="8.100" width="25.900" height="26" rx="1.800" stroke-width="2.600"/><path d="M1137.600 9v24.500M1146.200 9v24.500M1130 17.100h24M1130 25.200h24" stroke-width="1.800"/></g>
<circle cx="1295.700" cy="20.800" r="13.800" fill="#a5c9d1"/>
<path d="M1297.700 12.700C1294 10.200 1287 10.500 1284 14.500C1281.500 18.500 1284.500 21 1290 22.300C1294.500 23.400 1297.200 24.600 1297.200 27.200C1297.200 30 1293.500 32 1288.300 32.100C1295 33 1300.500 30 1300 26C1299.700 22.500 1296 21.300 1291.500 20.100C1287.500 19 1285.300 17.800 1286.500 15.300C1288 12 1293.500 11.300 1297.700 12.700Z" fill="#177f92"/>
<path d="M1424.500 9.500a1.500 1.500 0 0 1 1.500-1.500h10.500l2.500 3h15a1.500 1.500 0 0 1 1.500 1.500v22a1.500 1.500 0 0 1-1.500 1.500h-28a1.500 1.500 0 0 1-1.500-1.500z" fill="#a5c9d1"/>
<path d="M1437.700 17h5v7h4.300l-6.800 6.800-6.800-6.800h4.300z" fill="#177f92"/>
<g fill="#fff"><rect x="1581.700" y="8.800" width="32" height="6.400" rx="3.200"/><path d="M1586.900 15H1608.100L1612.600 33H1583.200Z"/></g>
<g fill="none" stroke="#fff" stroke-width="2.300" stroke-linecap="round"><path d="M1580.600 10.800C1578.800 14.500 1580.500 19 1584.300 20.600"/><path d="M1615 10.800C1616.800 14.500 1615.100 19 1611.300 20.600"/></g>
<path d="M1588.300 16.200L1585.800 30.700H1610L1607.500 16.200" fill="none" stroke="#21bbdb" stroke-width="1"/><path d="M1585 15.500H1610.500" stroke="#21bbdb" stroke-width=".7"/>
</svg>
<span class="t" style="left:69.0px;top:14.2px;font-size:15.9px;color:#a0d0da;transform:scaleX(0.828);transform-origin:0 50%;">DESIGN</span>
<span class="t" style="left:221.5px;top:14.2px;font-size:15.9px;color:#a0d0da;transform:scaleX(0.771);transform-origin:0 50%;">STORE</span>
<span class="t" style="left:366.6px;top:14.2px;font-size:15.9px;color:#a0d0da;transform:scaleX(0.818);transform-origin:0 50%;">LIBRARY</span>
<span class="t" style="left:528.5px;top:14.2px;font-size:15.9px;color:#ffffff;transform:scaleX(0.844);transform-origin:0 50%;">SEND</span>
<div class="abs" style="left:0;top:0;width:599px;height:1.300px;background:#24606e"></div><div class="abs" style="left:0;top:40.700px;width:599px;height:1.300px;background:#2a5560"></div><div class="abs" style="left:597.700px;top:0;width:1.300px;height:42px;background:#2a5560"></div>
</div>
<div id="panel">
<svg width="0" height="0" style="position:absolute"><defs><pattern id="hatch2" width="4.750" height="4.750" patternUnits="userSpaceOnUse"><rect width="4.750" height="4.750" fill="#fff"/><path d="M0 0L4.750 4.750M4.750 0L0 4.750" stroke="#c6c6c6" stroke-width="1"/></pattern><pattern id="hatch" width="5.200" height="5.200" patternUnits="userSpaceOnUse"><rect width="5.200" height="5.200" fill="#fff"/><path d="M0 0L5.200 5.200M5.200 0L0 5.200" stroke="#c6c6c6" stroke-width="1.050"/></pattern></defs></svg>
<div class="abs" style="left:0.0px;top:0.0px;width:570.0px;height:32.0px;background:#fff;"></div>
<div class="abs" style="left:114.0px;top:0.0px;width:113.8px;height:32.0px;background:#e6e6e6;"></div>
<div class="abs" style="left:114.0px;top:0.0px;width:113.8px;height:0.8px;background:#d6e8ee;"></div>
<svg class="abs" style="left:0;top:0" width="570" height="32" viewBox="1126 42 570 32"><circle cx="1142" cy="58.500" r="6.500" fill="#fff" stroke="#7a7a7a" stroke-width="1"/><rect x="1246.500" y="49" width="11.500" height="11.500" fill="none" stroke="#9a9a9a" stroke-width="1"/><circle cx="1258.500" cy="60" r="6.700" fill="none" stroke="#c2c2c2" stroke-width="1"/><rect x="1360.500" y="48.500" width="12" height="12" fill="#7a7a7a"/><circle cx="1372.500" cy="60.500" r="6.800" fill="#b4b4b4"/><path d="M1476.500 52.600L1487.700 49.400V60.300L1476.500 63.500Z" fill="#fff" stroke="#9c9c9c" stroke-width="1"/><path d="M1480.300 55.300L1487.700 53.300V60.300L1480.300 62.400Z" fill="#727272"/><path d="M1480.300 55.300L1491.800 52.300V62.600L1480.300 66.500Z" fill="none" stroke="#9c9c9c" stroke-width="1"/></svg>
<span class="t" style="left:37.0px;top:11.5px;font-size:12px;color:#34343c;transform:scaleX(0.954);transform-origin:0 50%;-webkit-text-stroke:0.6px #34343c;">Simple</span>
<span class="t" style="left:151.7px;top:11.5px;font-size:12px;color:#34343c;transform:scaleX(0.939);transform-origin:0 50%;-webkit-text-stroke:0.6px #34343c;">Line</span>
<span class="t" style="left:265.4px;top:11.5px;font-size:12px;color:#34343c;transform:scaleX(0.946);transform-origin:0 50%;-webkit-text-stroke:0.6px #34343c;">Fill</span>
<span class="t" style="left:379.5px;top:11.5px;font-size:12px;color:#34343c;transform:scaleX(0.916);transform-origin:0 50%;-webkit-text-stroke:0.6px #34343c;">Layer</span>
<span class="t" style="left:170.0px;top:47.8px;font-size:12px;color:#3c3c3c;">Select the action you would like to perform:</span>
<div class="abs" style="left:7.0px;top:72.3px;width:540.5px;height:41.7px;background:#e0e0e0;"></div>
<div class="abs" style="left:7.0px;top:114.0px;width:540.5px;height:3.5px;background:#fff;"></div>
<div class="abs" style="left:7.0px;top:117.5px;width:540.5px;height:41.5px;background:#e0e0e0;"></div>
<div class="abs" style="left:7.0px;top:159.0px;width:540.5px;height:61.0px;background:#fff;"></div>
<div class="abs" style="left:50.0px;top:72.3px;width:1.0px;height:147.7px;background:#e8e8e8;"></div>
<div class="abs" style="left:94.2px;top:72.3px;width:1.0px;height:147.7px;background:#e8e8e8;"></div>
<div class="abs" style="left:138.1px;top:72.3px;width:1.0px;height:147.7px;background:#e8e8e8;"></div>
<div class="abs" style="left:188.3px;top:72.3px;width:1.0px;height:147.7px;background:#e8e8e8;"></div>
<div class="abs" style="left:390.2px;top:72.3px;width:1.0px;height:147.7px;background:#e8e8e8;"></div>
<div class="abs" style="left:501.2px;top:72.3px;width:1.0px;height:147.7px;background:#e8e8e8;"></div>
<span class="t" style="left:10.8px;top:89.8px;font-size:9.6px;color:#8a8a8a;transform:scaleX(1.019);transform-origin:0 50%;">Tool No.</span>
<span class="t" style="left:56.8px;top:89.8px;font-size:9.6px;color:#8a8a8a;transform:scaleX(1.146);transform-origin:0 50%;">On/Off</span>
<span class="t" style="left:105.4px;top:89.8px;font-size:9.6px;color:#8a8a8a;">Weld</span>
<span class="t" style="left:141.7px;top:89.8px;font-size:9.6px;color:#8a8a8a;transform:scaleX(1.012);transform-origin:0 50%;">Line Color</span>
<span class="t" style="left:272.5px;top:89.8px;font-size:9.6px;color:#8a8a8a;">Material</span>
<span class="t" style="left:432.8px;top:89.8px;font-size:9.6px;color:#8a8a8a;transform:scaleX(1.034);transform-origin:0 50%;">Action</span>
<div class="abs" style="left:511.3px;top:84.0px;width:36.2px;height:20px;overflow:hidden"><span class="t" style="left:0.0px;top:5.8px;font-size:9.6px;color:#8a8a8a;transform:scaleX(1.046);transform-origin:0 50%;">Carriage</span></div>
<div class="abs" style="left:11.2px;top:130.2px;width:16px;height:15.500px;border:1.500px solid #45bcd6;background:#fff"></div>
<div class="abs" style="left:28.8px;top:130.2px;width:16px;height:15.500px;border:1px solid #cfcfcf;background:#fff"></div>
<span class="t" style="left:16.0px;top:131.7px;font-size:13px;color:#45bcd6;">1</span>
<span class="t" style="left:33.3px;top:131.7px;font-size:13px;color:#c4c4c4;">2</span>
<svg class="abs" style="left:62.5px;top:128.0px" width="20" height="20" viewBox="0 0 20 20"><rect width="20" height="20" fill="#484848"/><path d="M5 10.200l3.300 3.300 6.500-7" fill="none" stroke="#fff" stroke-width="2"/></svg>
<svg class="abs" style="left:100.0px;top:122.6px" width="31" height="31" viewBox="0 0 31 31"><rect x="1" y="1" width="29" height="29" fill="#fff" stroke="#35b6d4" stroke-width="2"/><circle cx="19.200" cy="12.600" r="7.300" fill="#d0d0d0" stroke="#27a9c8" stroke-width="1.700"/><rect x="4.800" y="14.400" width="14.800" height="11.600" fill="#d0d0d0" stroke="#27a9c8" stroke-width="1.700"/><path d="M12 14.400a7.300 7.300 0 0 0 7.600 5.500" fill="none" stroke="#27a9c8" stroke-width="1.500"/></svg>
<svg class="abs" style="left:144.6px;top:123.7px" width="30" height="29" viewBox="0 0 30 29"><rect width="30" height="29" fill="url(#hatch)"/></svg>
<span class="t" style="left:196.5px;top:134.1px;font-size:11.5px;color:#6f7f8f;-webkit-text-stroke:0.45px #6f7f8f;">Cardstock, Textured - Heavy (80lb)</span>
<svg class="abs" style="left:377.3px;top:133.4px" width="10.5" height="8.8" viewBox="0 0 10 10" preserveAspectRatio="none"><polygon points="0,0 10,0 5,10" fill="#3f3f3f"/></svg>
<span class="t" style="left:398.4px;top:134.1px;font-size:11.5px;color:#60707f;transform:scaleX(1.045);transform-origin:0 50%;-webkit-text-stroke:0.45px #60707f;">Cut</span>
<svg class="abs" style="left:488.3px;top:133.4px" width="10.5" height="8.8" viewBox="0 0 10 10" preserveAspectRatio="none"><polygon points="0,0 10,0 5,10" fill="#3f3f3f"/></svg>
<svg class="abs" style="left:519.0px;top:129.8px" width="20.0" height="16.2" viewBox="0 0 20 18" preserveAspectRatio="none"><path d="M10 1.700L18.400 16.600H1.600z" fill="none" stroke="#3f3f3f" stroke-width="2.300" stroke-linejoin="round"/><path d="M8.850 6.300h2.300l-.4 5.500h-1.500z" fill="#3f3f3f"/><circle cx="10" cy="13.700" r="1.200" fill="#3f3f3f"/></svg>
<div class="abs" style="left:11.2px;top:172.0px;width:16px;height:15.500px;border:1.500px solid #45bcd6;background:#fff"></div>
<div class="abs" style="left:28.8px;top:172.0px;width:16px;height:15.500px;border:1px solid #cfcfcf;background:#fff"></div>
<span class="t" style="left:16.0px;top:173.5px;font-size:13px;color:#45bcd6;">1</span>
<span class="t" style="left:33.3px;top:173.5px;font-size:13px;color:#c4c4c4;">2</span>
<svg class="abs" style="left:62.5px;top:169.8px" width="20" height="20" viewBox="0 0 20 20"><rect width="20" height="20" fill="#484848"/><path d="M5 10.200l3.300 3.300 6.500-7" fill="none" stroke="#fff" stroke-width="2"/></svg>
<svg class="abs" style="left:100.0px;top:164.4px" width="31" height="31" viewBox="0 0 31 31"><rect x="1" y="1" width="29" height="29" fill="#fff" stroke="#35b6d4" stroke-width="2"/><circle cx="19.200" cy="12.600" r="7.300" fill="#d0d0d0" stroke="#27a9c8" stroke-width="1.700"/><rect x="4.800" y="14.400" width="14.800" height="11.600" fill="#d0d0d0" stroke="#27a9c8" stroke-width="1.700"/><path d="M12 14.400a7.300 7.300 0 0 0 7.600 5.500" fill="none" stroke="#27a9c8" stroke-width="1.500"/></svg>
<div class="abs" style="left:144.6px;top:165.3px;width:30px;height:29.500px;border:1px solid #e2e2e2;background:#fff"></div>
<span class="t" style="left:196.5px;top:175.9px;font-size:11.5px;color:#6f7f8f;-webkit-text-stroke:0.45px #6f7f8f;">Cardstock, Textured - Heavy (80lb)</span>
<svg class="abs" style="left:377.3px;top:175.2px" width="10.5" height="8.8" viewBox="0 0 10 10" preserveAspectRatio="none"><polygon points="0,0 10,0 5,10" fill="#3f3f3f"/></svg>
<span class="t" style="left:398.4px;top:175.9px;font-size:11.5px;color:#60707f;transform:scaleX(0.942);transform-origin:0 50%;-webkit-text-stroke:0.45px #60707f;">Score</span>
<svg class="abs" style="left:488.3px;top:175.2px" width="10.5" height="8.8" viewBox="0 0 10 10" preserveAspectRatio="none"><polygon points="0,0 10,0 5,10" fill="#3f3f3f"/></svg>
<svg class="abs" style="left:519.0px;top:171.6px" width="20.0" height="16.2" viewBox="0 0 20 18" preserveAspectRatio="none"><path d="M10 1.700L18.400 16.600H1.600z" fill="none" stroke="#3f3f3f" stroke-width="2.300" stroke-linejoin="round"/><path d="M8.850 6.300h2.300l-.4 5.500h-1.500z" fill="#3f3f3f"/><circle cx="10" cy="13.700" r="1.200" fill="#3f3f3f"/></svg>
<div class="abs" style="left:0.0px;top:604.0px;width:570.0px;height:31.6px;background:#adadad;"></div>
<svg class="abs" style="left:6.0px;top:610.5px" width="20" height="20" viewBox="0 0 20 20"><rect x=".5" y=".5" width="19" height="19" fill="url(#hatch2)" stroke="#f4f4f4"/></svg>
<span class="t" style="left:32.4px;top:615.0px;font-size:14px;color:#ffffff;transform:scaleX(0.988);transform-origin:0 50%;">No Color</span>
<div class="abs" style="left:455.7px;top:607.3px;width:111.6px;height:24.7px;background:#e3e3e3;"></div>
<div class="abs" style="left:462.6px;top:613.4px;width:4.1px;height:13.0px;background:#3f3f3f;"></div>
<div class="abs" style="left:470.5px;top:613.4px;width:4.1px;height:13.0px;background:#3f3f3f;"></div>
<span class="t" style="left:485.7px;top:614.0px;font-size:13.5px;color:#3c3c3c;transform:scaleX(0.921);transform-origin:0 50%;">Add Pause</span>
<div class="abs" style="left:127.0px;top:643.0px;width:328.7px;height:109.0px;background:#fff;"></div>
<span class="t" style="left:43.4px;top:653.3px;font-size:13px;color:#3c3c3c;transform:scaleX(0.921);transform-origin:0 50%;">Material</span>
<span class="t" style="left:43.4px;top:690.3px;font-size:13px;color:#3c3c3c;">Action</span>
<span class="t" style="left:43.4px;top:727.3px;font-size:13px;color:#3c3c3c;transform:scaleX(0.906);transform-origin:0 50%;">Tool</span>
<span class="t" style="left:129.8px;top:654.2px;font-size:12.8px;color:#3a3a3a;transform:scaleX(0.976);transform-origin:0 50%;-webkit-text-stroke:0.45px #3a3a3a;">Cardstock, Textured - Heavy (80lb)</span>
<span class="t" style="left:167.0px;top:691.1px;font-size:12.8px;color:#3a3a3a;transform:scaleX(0.904);transform-origin:0 50%;-webkit-text-stroke:0.45px #3a3a3a;">Cut</span>
<span class="t" style="left:167.0px;top:729.1px;font-size:12.3px;color:#e8821e;transform:scaleX(0.972);transform-origin:0 50%;-webkit-text-stroke:0.45px #e8821e;">Awaiting Connection...</span>
<svg class="abs" style="left:432.5px;top:654.0px" width="12.8" height="10.5" viewBox="0 0 10 10" preserveAspectRatio="none"><polygon points="0,0 10,0 5,10" fill="#3f3f3f"/></svg>
<svg class="abs" style="left:432.5px;top:691.0px" width="12.8" height="10.5" viewBox="0 0 10 10" preserveAspectRatio="none"><polygon points="0,0 10,0 5,10" fill="#3f3f3f"/></svg>
<svg class="abs" style="left:432.5px;top:728.5px" width="12.8" height="10.5" viewBox="0 0 10 10" preserveAspectRatio="none"><polygon points="0,0 10,0 5,10" fill="#3f3f3f"/></svg>
<svg class="abs" style="left:134.0px;top:684.0px" width="20" height="22" viewBox="1260 726 20 22"><path d="M1268.400 728.100H1277V737.400L1272.800 744L1262.700 737.700Z" fill="#444"/><path d="M1262.900 739.300L1270.800 744.300L1263 745.900Z" fill="#444"/><path d="M1263.300 740.800L1269 744.300M1263.200 742.800L1266.800 745" stroke="#fff" stroke-width=".8" fill="none"/></svg>
<svg class="abs" style="left:131.9px;top:723.0px" width="23.8" height="19.6" viewBox="0 0 20 18" preserveAspectRatio="none"><path d="M10 1.700L18.400 16.600H1.600z" fill="none" stroke="#3f3f3f" stroke-width="2.300" stroke-linejoin="round"/><path d="M8.850 6.300h2.300l-.4 5.500h-1.500z" fill="#3f3f3f"/><circle cx="10" cy="13.700" r="1.200" fill="#3f3f3f"/></svg>
<div class="abs" style="left:16.0px;top:753.5px;width:538.0px;height:27.5px;background:#a8a8a8;"></div>
<div class="abs" style="left:16.0px;top:781.0px;width:538.0px;height:65.2px;background:#fff;"></div>
<span class="t" style="left:20.3px;top:760.0px;font-size:12.5px;color:#fff;white-space:pre;transform:scaleX(0.933);transform-origin:0 50%">Cut <b>Cardstock, Textured - Heavy (80lb)</b> Using Carriage 1</span>
<span class="t" style="left:22.0px;top:792.8px;font-size:12.5px;color:#3c3c3c;transform:scaleX(0.930);transform-origin:0 50%;">Blade Depth</span>
<svg class="abs" style="left:136.0px;top:786.0px" width="26.0" height="22.0" viewBox="0 0 20 18" preserveAspectRatio="none"><path d="M10 1.700L18.400 16.600H1.600z" fill="none" stroke="#3f3f3f" stroke-width="2.300" stroke-linejoin="round"/><path d="M8.850 6.300h2.300l-.4 5.500h-1.500z" fill="#3f3f3f"/><circle cx="10" cy="13.700" r="1.200" fill="#3f3f3f"/></svg>
<span class="t" style="left:205.0px;top:792.8px;font-size:12.5px;color:#3c3c3c;transform:scaleX(0.901);transform-origin:0 50%;">Force</span>
<div class="abs" style="left:291.5px;top:787.0px;width:86.5px;height:25.0px;background:#efefef;"></div>
<div class="abs" style="left:366.2px;top:787.5px;width:0.8px;height:18.5px;background:#555;"></div>
<svg class="abs" style="left:360.5px;top:800.5px" width="12.5" height="10.5" viewBox="0 0 10 10" preserveAspectRatio="none"><polygon points="0,10 10,10 5,0" fill="#3a3a3a"/></svg>
<div class="abs" style="left:383.8px;top:787.0px;width:50.2px;height:23.5px;background:#efefef;"></div>
<span class="t" style="left:386.6px;top:794.8px;font-size:11.5px;color:#3c3c3c;">30</span>
<svg class="abs" style="left:435.6px;top:790.0px" width="7.0" height="5.5" viewBox="0 0 10 10" preserveAspectRatio="none"><polygon points="0,10 10,10 5,0" fill="#3a3a3a"/></svg>
<svg class="abs" style="left:435.6px;top:802.5px" width="7.0" height="5.5" viewBox="0 0 10 10" preserveAspectRatio="none"><polygon points="0,0 10,0 5,10" fill="#3a3a3a"/></svg>
<svg class="abs" style="left:497.0px;top:784.0px" width="30" height="26" viewBox="1623 826 30 26"><path d="M1639.800 828.300L1627.600 850.200M1635.900 828.300L1648.600 850.200M1624.600 846.400H1651" fill="none" stroke="#777" stroke-width="1.100"/></svg>
<div class="abs" style="left:528.2px;top:787.0px;width:20px;height:20px;border:1px solid #3a3a3a;background:#fff"></div>
<span class="t" style="left:22.0px;top:825.8px;font-size:12.5px;color:#3c3c3c;transform:scaleX(0.827);transform-origin:0 50%;">Passes</span>
<div class="abs" style="left:111.9px;top:820.0px;width:34.5px;height:24.0px;background:#efefef;"></div>
<span class="t" style="left:115.3px;top:827.8px;font-size:11.5px;color:#3c3c3c;">1</span>
<svg class="abs" style="left:148.8px;top:823.5px" width="7.0" height="5.5" viewBox="0 0 10 10" preserveAspectRatio="none"><polygon points="0,10 10,10 5,0" fill="#3a3a3a"/></svg>
<svg class="abs" style="left:148.8px;top:836.0px" width="7.0" height="5.5" viewBox="0 0 10 10" preserveAspectRatio="none"><polygon points="0,0 10,0 5,10" fill="#3a3a3a"/></svg>
<span class="t" style="left:204.0px;top:823.0px;font-size:12.5px;color:#3c3c3c;transform:scaleX(0.874);transform-origin:0 50%;">Speed</span>
<div class="abs" style="left:290.8px;top:817.0px;width:86.2px;height:24.3px;background:#efefef;"></div>
<div class="abs" style="left:303.3px;top:817.5px;width:0.8px;height:18.5px;background:#555;"></div>
<svg class="abs" style="left:297.5px;top:830.5px" width="12.5" height="10.5" viewBox="0 0 10 10" preserveAspectRatio="none"><polygon points="0,10 10,10 5,0" fill="#3a3a3a"/></svg>
<div class="abs" style="left:382.4px;top:817.0px;width:50.1px;height:23.6px;background:#efefef;"></div>
<span class="t" style="left:385.9px;top:824.8px;font-size:11.5px;color:#3c3c3c;">4</span>
<svg class="abs" style="left:435.0px;top:820.0px" width="7.0" height="5.5" viewBox="0 0 10 10" preserveAspectRatio="none"><polygon points="0,10 10,10 5,0" fill="#3a3a3a"/></svg>
<svg class="abs" style="left:435.0px;top:832.5px" width="7.0" height="5.5" viewBox="0 0 10 10" preserveAspectRatio="none"><polygon points="0,0 10,0 5,10" fill="#3a3a3a"/></svg>
<div class="abs" style="left:462.0px;top:817.0px;width:86.0px;height:23.6px;background:#e0e0e0;"></div>
<span class="t" style="left:487.5px;top:823.5px;font-size:13px;color:#3c3c3c;transform:scaleX(0.928);transform-origin:0 50%;">MORE</span>
<div class="abs" style="left:1.5px;top:852.7px;width:568.5px;height:21.8px;background:#e1e1e1;"></div>
<span class="t" style="left:10.6px;top:860.0px;font-size:11.5px;color:#5a5a5a;transform:scaleX(0.952);transform-origin:0 50%;">Cameo 4 (31295E64)</span>
<svg class="abs" style="left:119.7px;top:858.5px" width="14" height="14" viewBox="0 0 14 14"><circle cx="7" cy="7" r="6.500" fill="#3fbe22"/><path d="M3.500 7.300l2.500 2.500 4.500-5" fill="none" stroke="#fff" stroke-width="1.700"/></svg>
<div class="abs" style="left:0.0px;top:874.5px;width:570.0px;height:48.7px;background:#fff;"></div>
<svg class="abs" style="left:4.0px;top:884.0px" width="79" height="26" viewBox="1130 926 79 26"><path d="M1137 927h65.500l5.700 17v7h-77v-7z" fill="#e9e9e9"/><path d="M1131.200 944h77v1h-77z" fill="#d9d9d9"/><path d="M1132.800 946h73.800v5h-73.800z" fill="#e2e2e2"/><path d="M1149 927.500h41l5 17.500v6h-50.500v-6z" fill="#dcdcdc"/><path d="M1144.500 945.500h50.500M1144.500 947.500h50.500" stroke="#cdcdcd" stroke-width=".8"/><rect x="1163" y="949.800" width="12" height="1.400" fill="#c6c6c6"/><circle cx="1201.300" cy="932.300" r=".7" fill="#9a9a9a"/><circle cx="1199" cy="936" r=".8" fill="#f6f6f6"/><circle cx="1202.500" cy="938" r=".8" fill="#f6f6f6"/><circle cx="1200" cy="940" r=".8" fill="#f6f6f6"/></svg>
<span class="t" style="left:87.7px;top:881.6px;font-size:10.8px;color:#d40f17;font-weight:bold;transform:scaleX(1.045);transform-origin:0 50%;">Unavailable</span>
<svg class="abs" style="left:364.0px;top:883.3px" width="40" height="28" viewBox="0 0 40 28"><g fill="#2ab4d6"><path d="M20 .5l6 9H14z"/><path d="M20 26.500l6-9H14z"/><path d="M.8 13.500l10-6v12z"/><path d="M39.200 13.500l-10-6v12z"/></g></svg>
<div class="abs" style="left:411.4px;top:882.0px;width:15px;height:15.500px;border:1px solid #45bcd6;background:#fff"></div>
<div class="abs" style="left:411.4px;top:901.0px;width:15px;height:15.500px;border:1px solid #d0d0d0;background:#fff"></div>
<span class="t" style="left:415.5px;top:883.8px;font-size:13px;color:#45bcd6;">1</span>
<span class="t" style="left:415.5px;top:902.8px;font-size:13px;color:#cfcfcf;">2</span>
<div class="abs" style="left:434.0px;top:881.0px;width:130.0px;height:35.6px;background:#e0e0e0;"></div>
<span class="t" style="left:481.6px;top:892.0px;font-size:18px;color:#9c9c9c;transform:scaleX(0.789);transform-origin:0 50%;">TEST</span>
<div class="abs" style="left:0.0px;top:923.2px;width:570.0px;height:20.0px;background:#7fd0fb;"></div>
<svg class="abs" style="left:3.5px;top:926.7px" width="13" height="13" viewBox="0 0 13 13"><circle cx="6.500" cy="6.500" r="6.300" fill="#10109e"/><text x="6.700" y="10.300" font-family="Liberation Serif,serif" font-size="10.500" font-weight="bold" font-style="italic" fill="#fff" text-anchor="middle">i</text></svg>
<span class="t" style="left:24.4px;top:926.5px;font-size:11.5px;color:#6a8ea6;transform:scaleX(1.015);transform-origin:0 50%;text-decoration:underline;">Click here</span>
<span class="t" style="left:79.7px;top:926.5px;font-size:11.5px;color:#0e3c76;transform:scaleX(1.053);transform-origin:0 50%;">if you have trouble connecting.</span>
<svg class="abs" style="left:555.5px;top:928.5px" width="9" height="9" viewBox="0 0 9 9"><path d="M.8.800l7.400 7.400M8.200.800L.8 8.200" stroke="#27303a" stroke-width="1.300"/></svg>
<div class="abs" style="left:224.8px;top:953.0px;width:138.2px;height:31.7px;background:#56a9bd;"></div>
<span class="t" style="left:272.5px;top:960.5px;font-size:19px;color:#bfe0e8;transform:scaleX(0.832);transform-origin:0 50%;">SEND</span>
<svg class="abs" style="left:11.0px;top:959.0px" width="32" height="25" viewBox="1137 1001 32 25"><rect x="1138" y="1001.700" width="28.300" height="7" rx="3.500" fill="#f2f2f2" stroke="#767676" stroke-width="1.500"/><path d="M1139 1007.500c2 1.800 4 2 6 2h14c2 0 4-.2 6-2" fill="none" stroke="#8a8a8a" stroke-width="1.600"/><path d="M1144.200 1009v11" stroke="#7a7a7a" stroke-width="2"/><path d="M1143.200 1019h10" stroke="#9a9a9a" stroke-width="2.400"/><circle cx="1157.800" cy="1016.900" r="6.900" fill="#fff" stroke="#222" stroke-width="1.300"/><text x="1157.800" y="1021.200" font-family="Liberation Sans,sans-serif" font-size="11.500" fill="#e0303a" text-anchor="middle">3</text></svg>
<svg class="abs" style="left:65.0px;top:958.0px" width="27" height="21" viewBox="1191 1000 27 21"><path d="M1197 1009.500v5.500c2 2.800 12 2.800 15.300 0v-5.500l-7.800 3.500z" fill="#8e8e8e"/><path d="M1192.100 1005.900l11.700-4.900 12.300 4.600-11.600 5.800z" fill="#7c7c7c"/><path d="M1202.500 1005.200l-7.800 3.600c-.6 3.500-1 7-1.600 11" fill="none" stroke="#6a6a6a" stroke-width="1.400"/><path d="M1203 1005l4.500-1.700" stroke="#d8d8d8" stroke-width="1"/></svg>
<svg class="abs" style="left:374.1px;top:958.8px" width="14" height="21" viewBox="0 0 14 21"><rect width="14" height="20.100" fill="#c4c4c4"/><rect x="0" y="0.0" width="14" height="1.4" fill="#555"/><rect x="0" y="2.1" width="14" height="1.2" fill="#777"/><rect x="0" y="3.9" width="14" height="0.9" fill="#999"/><rect x="0" y="5.4" width="14" height="1.3" fill="#666"/><rect x="0" y="7.3" width="14" height="1.0" fill="#999"/><rect x="0" y="8.9" width="14" height="1.3" fill="#666"/><rect x="0" y="10.8" width="14" height="1.0" fill="#8a8a8a"/><rect x="0" y="12.4" width="14" height="1.2" fill="#666"/><rect x="0" y="14.2" width="14" height="1.0" fill="#999"/><rect x="0" y="15.8" width="14" height="1.5" fill="#4a4a4a"/><rect x="0" y="17.9" width="14" height="1.0" fill="#8a8a8a"/><rect x="0" y="19.2" width="14" height="0.9" fill="#666"/></svg>
<svg class="abs" style="left:534.4px;top:959.5px" width="19" height="19" viewBox="-9.500 -9.500 19 19"><rect x="-1.900" y="-9" width="3.800" height="5" rx=".6" fill="#7c7c7c" stroke="#5c5c5c" stroke-width=".6" transform="rotate(0)"/><rect x="-1.900" y="-9" width="3.800" height="5" rx=".6" fill="#7c7c7c" stroke="#5c5c5c" stroke-width=".6" transform="rotate(45)"/><rect x="-1.900" y="-9" width="3.800" height="5" rx=".6" fill="#7c7c7c" stroke="#5c5c5c" stroke-width=".6" transform="rotate(90)"/><rect x="-1.900" y="-9" width="3.800" height="5" rx=".6" fill="#7c7c7c" stroke="#5c5c5c" stroke-width=".6" transform="rotate(135)"/><rect x="-1.900" y="-9" width="3.800" height="5" rx=".6" fill="#7c7c7c" stroke="#5c5c5c" stroke-width=".6" transform="rotate(180)"/><rect x="-1.900" y="-9" width="3.800" height="5" rx=".6" fill="#7c7c7c" stroke="#5c5c5c" stroke-width=".6" transform="rotate(225)"/><rect x="-1.900" y="-9" width="3.800" height="5" rx=".6" fill="#7c7c7c" stroke="#5c5c5c" stroke-width=".6" transform="rotate(270)"/><rect x="-1.900" y="-9" width="3.800" height="5" rx=".6" fill="#7c7c7c" stroke="#5c5c5c" stroke-width=".6" transform="rotate(315)"/><circle r="6" fill="#7c7c7c" stroke="#5c5c5c" stroke-width=".6"/><circle r="4.800" fill="#7c7c7c"/><circle r="1.500" fill="#dedede" stroke="#5c5c5c" stroke-width=".7"/></svg>
<div class="abs" style="left:0.0px;top:992.6px;width:570.0px;height:2.4px;background:#efefef;"></div>
</div>
</body>
</html>
